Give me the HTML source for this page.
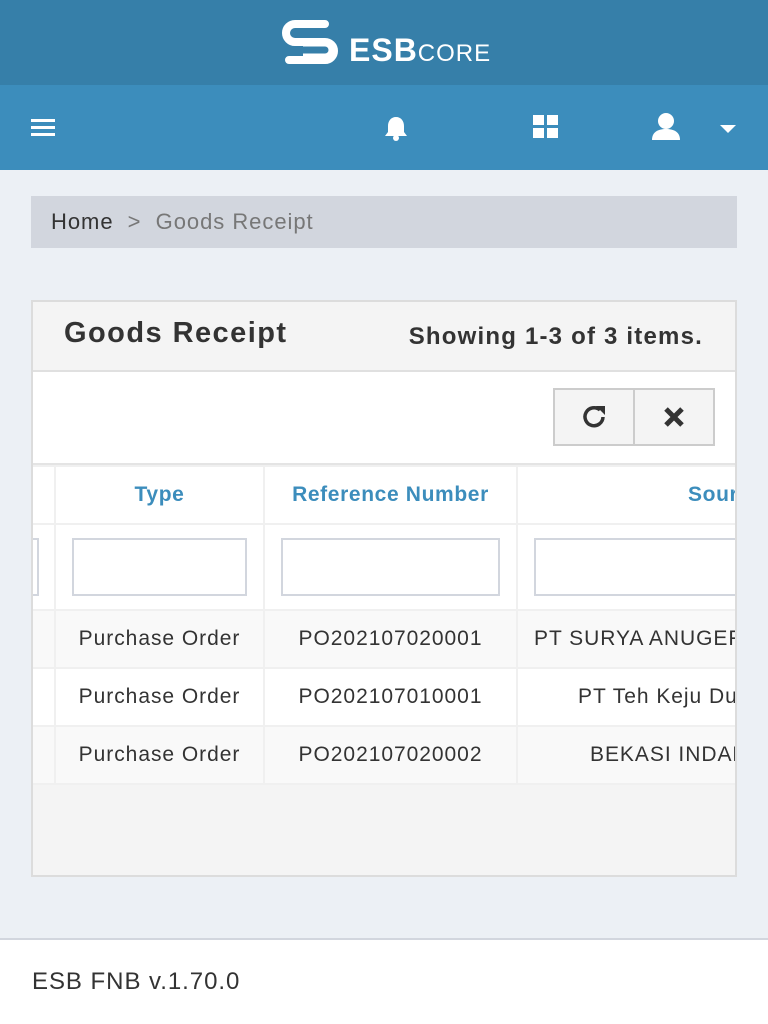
<!DOCTYPE html>
<html><head><style>
*{margin:0;padding:0;box-sizing:border-box}
body{width:768px;height:1024px;background:#ecf0f5;font-family:"Liberation Sans",sans-serif;position:relative;overflow:hidden;letter-spacing:0.06em}
.top{position:absolute;left:0;top:0;width:768px;height:85px;background:#367fa9}
.nav{position:absolute;left:0;top:85px;width:768px;height:85px;background:#3c8dbc}
.bc{position:absolute;left:31px;top:196px;width:706px;height:52px;background:#d2d6de;font-size:22px;color:#333;padding:13px 20px}
.bc span{color:#777}
.box{position:absolute;left:31px;top:300px;width:706px;height:577px;background:#f4f4f4;border:2px solid #dcdcdc;overflow:hidden}
.hd{height:70px;border-bottom:2px solid #e0e0e0;position:relative}
.hd h1{position:absolute;left:31px;top:15px;font-size:29px;color:#333;letter-spacing:0.05em}
.hd p{position:absolute;right:32px;top:21px;font-size:24px;font-weight:bold;color:#333;letter-spacing:0.05em}
.tb{height:93px;background:#fff;position:relative;border-bottom:2px solid #e4e4e4}
.btns{position:absolute;left:520px;top:16px;width:162px;height:58px;border:2px solid #ccc;background:#f4f4f4;display:flex}
.btns div{flex:1;display:flex;align-items:center;justify-content:center}
.btns div:first-child{border-right:2px solid #ccc}
table{border-collapse:collapse;position:absolute;left:-2px;top:163px;background:#fff;table-layout:fixed;width:800px}
td{border:2px solid #f0f0f0;font-size:21px;color:#333;text-align:center;white-space:nowrap;overflow:hidden}
th{border:2px solid #f0f0f0;color:#3c8dbc;font-size:21px;height:58px;white-space:nowrap;overflow:hidden;letter-spacing:0.03em}
.inp{border:2px solid #d2d6de;height:58px;background:#fff}
tr.r td{height:58px;background:#f9f9f9}
tr.r.w td{background:#fff}
.foot{position:absolute;left:0;top:938px;width:768px;height:86px;background:#fff;border-top:2px solid #d2d6de;font-size:24px;color:#333;padding:28px 32px}
</style></head><body>
<div class="top">
<svg width="70" height="52" style="position:absolute;left:281px;top:18px" viewBox="0 0 70 52"><path d="M44 6H14a9 9 0 0 0 0 18h30a9 9 0 0 1 0 18H8" fill="none" stroke="#fff" stroke-width="8" stroke-linecap="round"/><path d="M22 26h22a6 6 0 0 1 0 12H22" fill="none" stroke="#fff" stroke-width="5"/></svg>
<div style="position:absolute;left:349px;top:32px;color:#fff;font-weight:bold;font-size:32px;letter-spacing:1px">ESB<span style="font-size:24px;font-weight:normal;letter-spacing:1px">CORE</span></div>
</div>
<div class="nav">
<svg style="position:absolute;left:31px;top:34px" width="24" height="18"><rect y="0" width="24" height="3" fill="#fff"/><rect y="7" width="24" height="3" fill="#fff"/><rect y="14" width="24" height="3" fill="#fff"/></svg>
<svg style="position:absolute;left:382px;top:29px" width="28" height="28" viewBox="0 0 28 28"><path d="M14 3c-5 0-8 4-8 9v6l-3 4h22l-3-4v-6c0-5-3-9-8-9z" fill="#fff"/><circle cx="14" cy="24" r="3" fill="#fff"/></svg>
<svg style="position:absolute;left:533px;top:30px" width="26" height="24"><rect width="11" height="10" fill="#fff"/><rect x="14" width="11" height="10" fill="#fff"/><rect y="13" width="11" height="10" fill="#fff"/><rect x="14" y="13" width="11" height="10" fill="#fff"/></svg>
<svg style="position:absolute;left:650px;top:27px" width="32" height="28" viewBox="0 0 32 28"><circle cx="16" cy="9" r="8" fill="#fff"/><path d="M2 28c0-8 6-11 14-11s14 3 14 11z" fill="#fff"/></svg>
<svg style="position:absolute;left:720px;top:40px" width="16" height="9"><path d="M0 0h16L8 8z" fill="#fff"/></svg>
</div>
<div class="bc">Home &nbsp;<span>&gt;&nbsp; Goods Receipt</span></div>
<div class="box">
<div class="hd"><h1>Goods Receipt</h1><p>Showing 1-3 of 3 items.</p></div>
<div class="tb"><div class="btns"><div><svg width="30" height="30" viewBox="0 0 30 30"><path d="M24 15a9 9 0 1 1-3-7" fill="none" stroke="#333" stroke-width="3.5"/><path d="M17 4h9v9z" fill="#333"/></svg></div><div><svg width="24" height="24" viewBox="0 0 24 24"><path d="M4 4l16 16M20 4L4 20" stroke="#333" stroke-width="5"/></svg></div></div></div>
<table>
<colgroup><col style="width:23px"><col style="width:209px"><col style="width:253px"><col style="width:315px"></colgroup>
<tr><th></th><th>Type</th><th>Reference Number</th><th style="text-align:left;padding-left:170px">Source</th></tr>
<tr style="height:86px"><td><div class="inp" style="width:8px;margin-left:-2px"></div></td><td style="padding:0 16px"><div class="inp"></div></td><td style="padding:0 16px"><div class="inp"></div></td><td style="padding:0 0 0 16px"><div class="inp" style="width:260px"></div></td></tr>
<tr class="r"><td></td><td>Purchase Order</td><td>PO202107020001</td><td style="text-align:left;padding-left:16px">PT SURYA ANUGERAH</td></tr>
<tr class="r w"><td></td><td>Purchase Order</td><td>PO202107010001</td><td style="text-align:left;padding-left:60px">PT Teh Keju Dunia</td></tr>
<tr class="r"><td></td><td>Purchase Order</td><td>PO202107020002</td><td style="text-align:left;padding-left:72px">BEKASI INDAH</td></tr>
</table>
</div>
<div class="foot">ESB FNB v.1.70.0</div>
</body></html>
